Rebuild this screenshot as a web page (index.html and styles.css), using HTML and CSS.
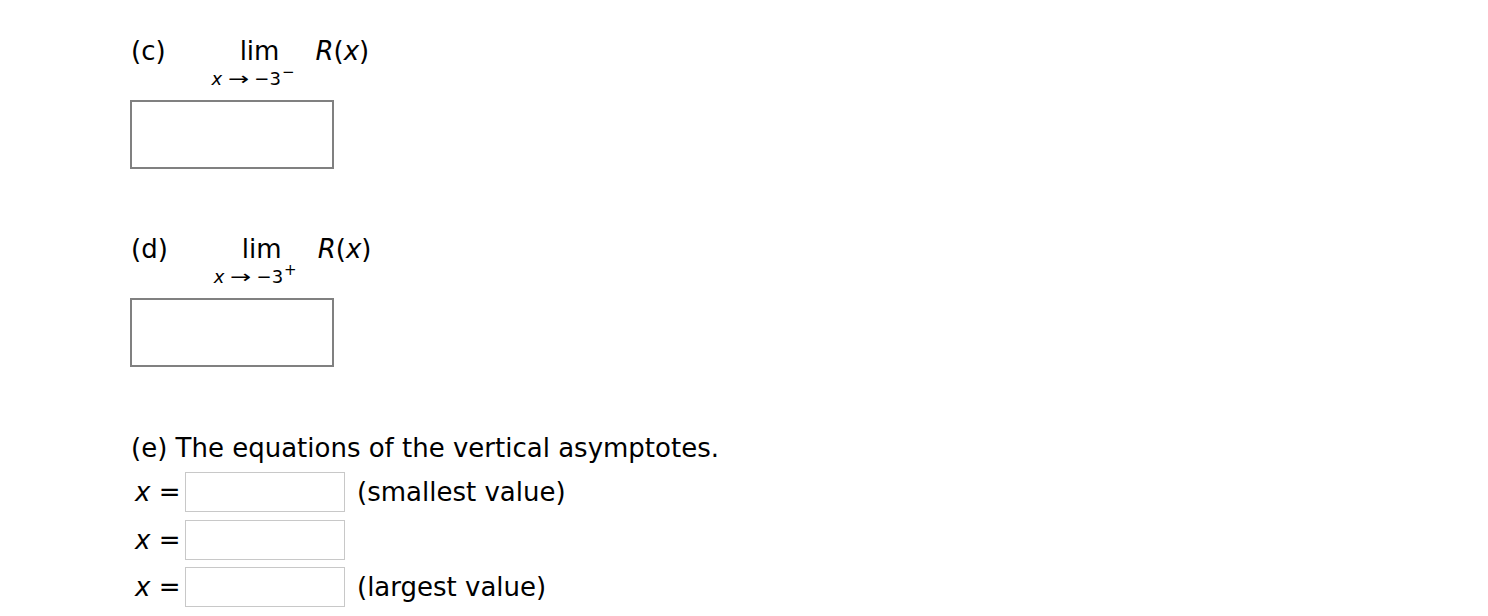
FILE: index.html
```html
<!DOCTYPE html>
<html>
<head>
<meta charset="utf-8">
<link rel="stylesheet" href="styles.css">
</head>
<body>
<div class="page">
  <div class="part part-c">
    <div class="limrow">
      <span class="label">(c)</span>
      <span class="lim">
        <span class="lim-word">lim</span>
        <span class="lim-sub"><i>x</i><span class="arrow">→</span>−3<sup>−</sup></span>
      </span>
      <span class="func"><i>R</i>(<i>x</i>)</span>
    </div>
    <div class="bigbox"></div>
  </div>
  <div class="part part-d">
    <div class="limrow">
      <span class="label">(d)</span>
      <span class="lim">
        <span class="lim-word">lim</span>
        <span class="lim-sub"><i>x</i><span class="arrow">→</span>−3<sup>+</sup></span>
      </span>
      <span class="func"><i>R</i>(<i>x</i>)</span>
    </div>
    <div class="bigbox"></div>
  </div>
  <div class="part part-e">
    <div class="heading">(e) The equations of the vertical asymptotes.</div>
    <div class="eqrow"><span class="eq"><i>x</i> =</span><span class="smallbox"></span><span class="note">(smallest value)</span></div>
    <div class="eqrow"><span class="eq"><i>x</i> =</span><span class="smallbox"></span></div>
    <div class="eqrow"><span class="eq"><i>x</i> =</span><span class="smallbox"></span><span class="note">(largest value)</span></div>
  </div>
</div>
</body>
</html>
```
FILE: styles.css
```css
html, body {
  margin: 0;
  padding: 0;
  background: #fff;
}
.page {
  font-family: "DejaVu Sans", Verdana, sans-serif;
  font-size: 26px;
  color: #000;
  padding: 36px 0 0 130px;
}
.limrow {
  display: flex;
  align-items: flex-start;
  line-height: 30px;
}
.label {
  padding-left: 1px;
  margin-right: 46px;
}
.lim {
  display: flex;
  flex-direction: column;
  align-items: center;
}
.lim-word {
  line-height: 30px;
  padding-left: 13px;
}
.lim-sub {
  font-size: 18px;
  line-height: 24px;
  margin-top: 1px;
}
.arrow {
  display: inline-block;
  transform: scaleX(1.4);
  margin: 0 8px 0 9px;
}
.lim-sub sup {
  font-size: 15px;
  line-height: 0;
  vertical-align: 8px;
  margin-left: 1px;
}
.func {
  margin-left: 21px;
}
.bigbox {
  width: 200px;
  height: 65px;
  border: 2px solid #808080;
  margin-top: 9px;
}
.part-d {
  margin-top: 65px;
}
.part-e {
  margin-top: 66px;
}
.heading {
  line-height: 30px;
  padding-left: 1px;
}
.eqrow {
  display: flex;
  align-items: center;
  height: 40px;
  margin-top: 9px;
}
.eqrow + .eqrow {
  margin-top: 7.5px;
}
.eq {
  width: 55px;
  padding-left: 5px;
  box-sizing: border-box;
}
.smallbox {
  width: 158px;
  height: 38px;
  border: 1px solid #c8c8c8;
}
.note {
  margin-left: 12px;
}
```
